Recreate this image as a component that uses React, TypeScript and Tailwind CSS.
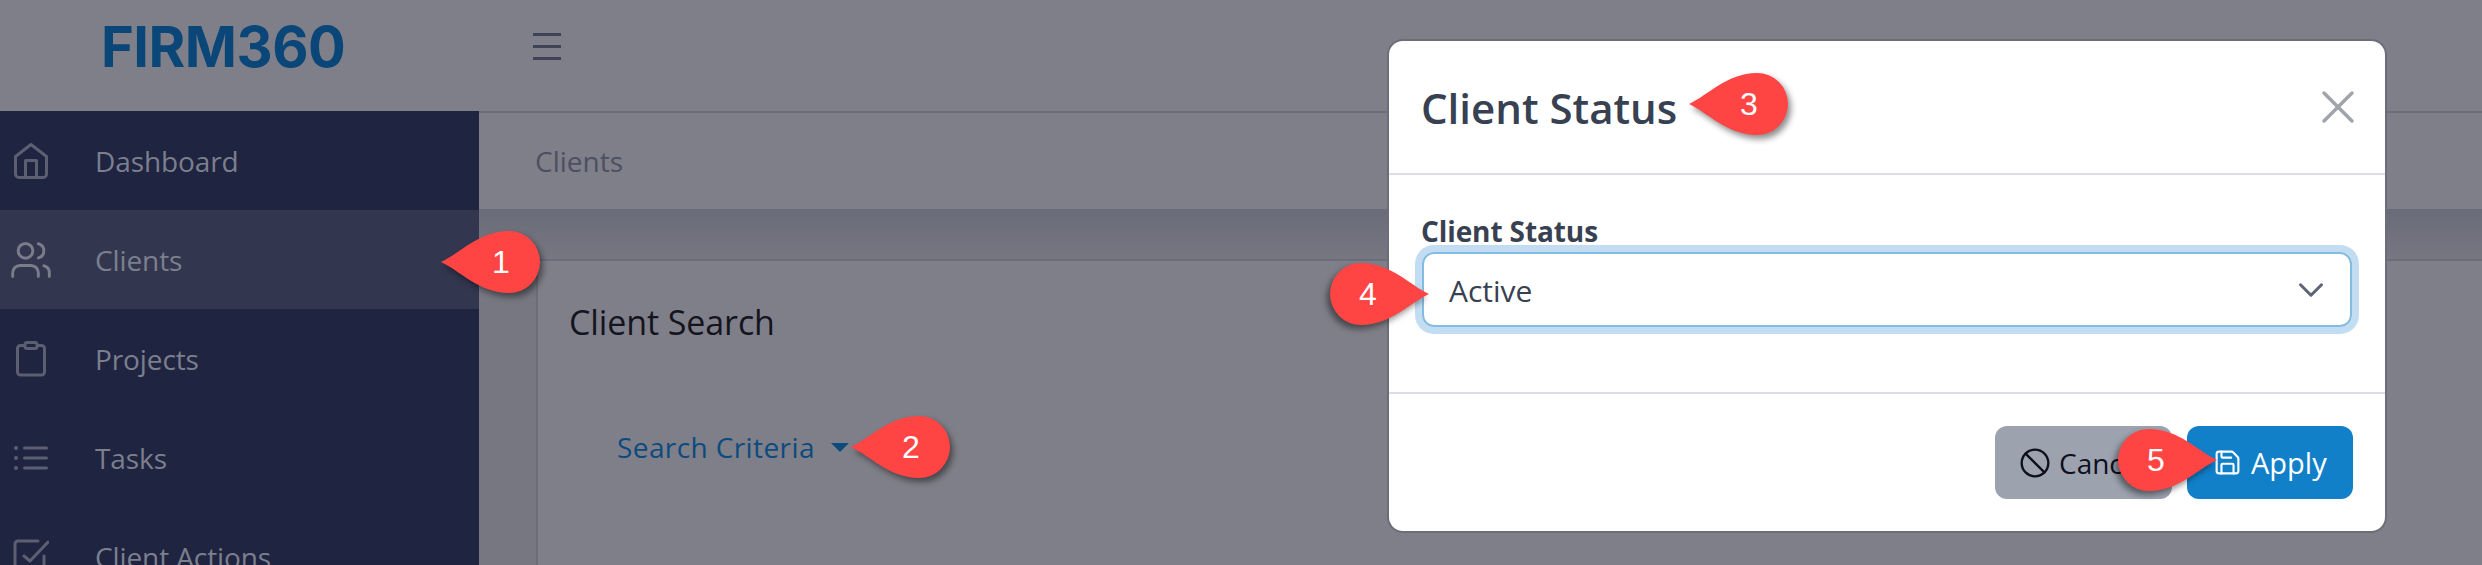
import React from 'react';
import { Ban, ChevronDown, Save, Users, X } from 'lucide-react';

const HomeIcon = () => (
  <svg width="34" height="36" viewBox="0 0 34 36" fill="none" stroke="currentColor" strokeWidth="3" strokeLinejoin="round">
    <path d="M1.5 13.5 17 1.5l15.5 12V31a3.5 3.5 0 0 1-3.5 3.5H5A3.5 3.5 0 0 1 1.5 31Z" />
    <path d="M11.5 34V17.5h11V34" />
  </svg>
);

const UsersIcon = () => <Users className="h-[44px] w-[44px]" strokeWidth={1.6} />;

const ClipboardIcon = () => (
  <svg width="30" height="36" viewBox="0 0 30 36" fill="none" stroke="currentColor" strokeWidth="3">
    <path d="M8 4.5H4.5a3 3 0 0 0-3 3V31a3 3 0 0 0 3 3h21a3 3 0 0 0 3-3V7.5a3 3 0 0 0-3-3H22" />
    <rect x="9" y="1.5" width="12" height="6" rx="2" />
  </svg>
);

const ListIcon = () => (
  <svg width="34" height="24" viewBox="0 0 34 24" fill="none" stroke="currentColor" strokeWidth="3" strokeLinecap="round">
    <path d="M10.5 2h22M10.5 12h22M10.5 22h22" />
    <path d="M2 2h.01M2 12h.01M2 22h.01" strokeWidth="4" />
  </svg>
);

const CheckIcon = () => (
  <svg width="36" height="36" viewBox="0 0 36 36" fill="none" stroke="currentColor" strokeWidth="3" strokeLinecap="round" strokeLinejoin="round">
    <path d="M25 2H5a3 3 0 0 0-3 3v26a3 3 0 0 0 3 3h23a3 3 0 0 0 3-3V17" />
    <path d="m11 17 6 5L35 3" />
  </svg>
);

const navItems = [
  { label: 'Dashboard', icon: HomeIcon },
  { label: 'Clients', icon: UsersIcon, active: true },
  { label: 'Projects', icon: ClipboardIcon },
  { label: 'Tasks', icon: ListIcon },
  { label: 'Client Actions', icon: CheckIcon },
];

// red numbered teardrop, tip on the left unless flipped
const Callout: React.FC<{ n: number; className: string; flip?: boolean }> = ({ n, className, flip }) => (
  <div className={`absolute z-20 h-[62px] w-[99px] ${className}`}>
    <svg
      width="99"
      height="62"
      viewBox="0 0 99 62"
      className={`absolute inset-0 overflow-visible drop-shadow-[3px_4px_3px_rgba(0,0,0,0.45)] ${flip ? '-scale-x-100' : ''}`}
    >
      <path d="M0 31 C18 23 38 0 68 0 A31 31 0 0 1 68 62 C38 62 18 39 0 31Z" fill="#ff4444" />
    </svg>
    <span
      className={`absolute top-0 flex h-[62px] w-[40px] items-center justify-center font-['Liberation_Sans',sans-serif] text-[32px] text-white ${flip ? 'left-[18px]' : 'left-[40px]'}`}
    >
      {n}
    </span>
  </div>
);

export default function App() {
  return (
    <div className="relative flex h-[565px] w-[2482px] flex-col overflow-hidden bg-[#7f7f89] font-['Open_Sans',sans-serif]">
      <header className="flex h-[111px] shrink-0 items-center pb-[18px]">
        <div className="w-[479px] pl-[101px] font-['Inter',sans-serif] text-[56px] font-bold tracking-[-0.5px] text-[#0a4678]">
          FIRM360
        </div>
        <div className="ml-[54px] flex w-[28px] flex-col gap-[9.5px]">
          <span className="h-[2.5px] bg-[#3e4355]" />
          <span className="h-[2.5px] bg-[#3e4355]" />
          <span className="h-[2.5px] bg-[#3e4355]" />
        </div>
      </header>

      <div className="flex min-h-0 flex-1">
        <nav className="w-[479px] shrink-0 bg-[#1f2440]">
          {navItems.map((item) => (
            <div
              key={item.label}
              className={`flex h-[99px] items-center text-[28px] tracking-[-0.1px] text-[#7c7f8e] ${item.active ? 'bg-[#32374f]' : ''}`}
            >
              <span className={`flex w-[62px] shrink-0 justify-center ${item.active ? 'text-[#7a7c8a]' : 'text-[#5c5f72]'}`}>
                <item.icon />
              </span>
              <span className="ml-[33px]">{item.label}</span>
            </div>
          ))}
        </nav>

        <main className="min-w-0 flex-1 border-t-2 border-[#6c6d7b]">
          <div className="flex h-[96px] items-center pl-[56px] text-[28px] text-[#4c5062]">Clients</div>
          <div className="h-full bg-gradient-to-b from-[#6a6b79] to-[#777782] to-[50px] pl-[57px] pt-[50px]">
            <section className="h-full border-l-2 border-t-2 border-[#6c6d7b] bg-[#7f7f89] pl-[31px] pt-[39px]">
              <h2 className="text-[34px] leading-[44px] tracking-[-0.1px] text-[#14141e]">Client Search</h2>
              <div className="ml-[48px] mt-[82px] flex items-center text-[28px] font-medium tracking-[0.4px] text-[#0d4a7e]">
                Search Criteria
                <span className="ml-[16px] h-0 w-0 border-x-[9px] border-t-[9px] border-x-transparent border-t-[#0d4a7e]" />
              </div>
            </section>
          </div>
        </main>
      </div>

      <div className="absolute left-[1389px] top-[41px] z-10 flex h-[490px] w-[996px] flex-col rounded-[14px] bg-white text-[#374151] shadow-[0_0_0_2px_#6c6d7b]">
        <div className="flex h-[134px] shrink-0 items-center justify-between border-b-2 border-[#dcdee3] pl-[32px] pr-[19px]">
          <h1 className="text-[42px] font-semibold">Client Status</h1>
          <X className="h-[56px] w-[56px] text-[#a0a4ab]" strokeWidth={1.5} />
        </div>
        <div className="h-[219px] shrink-0 border-b-2 border-[#dcdee3] px-[33px] pt-[37px]">
          <label className="-ml-px block text-[28px] font-bold leading-[38px] tracking-[-0.1px]">Client Status</label>
          <div className="mt-[2px] flex h-[75px] items-center justify-between rounded-[12px] border-2 border-[#84bbe0] pl-[25px] pr-[18px] text-[30px] shadow-[0_0_0_7px_#c2ddf2]">
            <span className="pt-[2px]">Active</span>
            <ChevronDown className="h-[42px] w-[42px] text-[#5c6475]" strokeWidth={1.75} />
          </div>
        </div>
        <div className="flex flex-1 items-start justify-end gap-[15px] pr-[32px] pt-[32px] text-[28px]">
          <button className="flex h-[73px] w-[177px] items-center rounded-[12px] bg-[#9ca3af] pl-[24px] text-[#0f0f1e]">
            <Ban className="mr-[8px] h-[32px] w-[32px] shrink-0" strokeWidth={1.75} />
            Cancel
          </button>
          <button className="flex h-[73px] w-[166px] items-center rounded-[12px] bg-[#1180c9] pl-[26px] text-[29px] text-white">
            <Save className="mr-[9px] h-[29px] w-[29px] shrink-0" strokeWidth={1.75} />
            Apply
          </button>
        </div>
      </div>

      <Callout n={1} className="left-[441px] top-[231px]" />
      <Callout n={2} className="left-[851px] top-[416px]" />
      <Callout n={3} className="left-[1689px] top-[73px]" />
      <Callout n={4} flip className="left-[1330px] top-[263px]" />
      <Callout n={5} flip className="left-[2118px] top-[429px]" />
    </div>
  );
}
